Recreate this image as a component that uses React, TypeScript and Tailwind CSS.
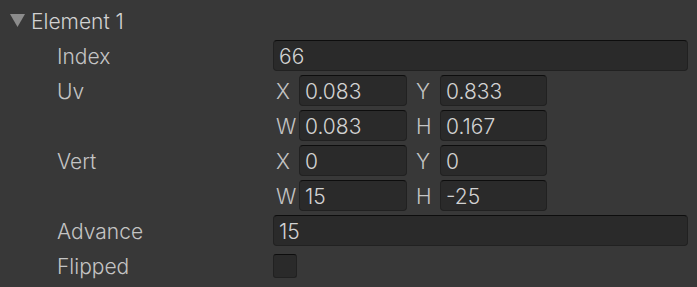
const Field = ({ value, className = "" }: { value: string; className?: string }) => (
  <div
    className={`h-[31px] flex items-center pl-[5px] pt-[3px] bg-[#2a2a2a] border border-[#212121] border-t-[#0d0d0d] rounded-[4px] text-[#d2d2d2] ${className}`}
  >
    {value}
  </div>
);

const Label = ({ text }: { text: string }) => (
  <div className="w-[273px] pl-[57px] pt-[3px] text-[#c4c4c4] shrink-0">{text}</div>
);

const Pair = ({ a, av, b, bv }: { a: string; av: string; b: string; bv: string }) => (
  <div className="flex items-center">
    <span className="w-[26px] pl-[3px] pt-[3px] text-[#c4c4c4]">{a}</span>
    <Field value={av} className="w-[108px]" />
    <span className="w-[33px] pl-[9px] pt-[3px] text-[#c4c4c4]">{b}</span>
    <Field value={bv} className="w-[107px]" />
  </div>
);

export default function App() {
  return (
    <div
      className="w-[697px] h-[287px] bg-[#383838] pt-[5px] flex flex-col gap-[4px] text-[21px] font-light overflow-hidden"
      style={{ fontFamily: "Inter, 'Noto Sans', sans-serif" }}
    >
      <div className="h-[31px] flex items-center">
        <svg width="15" height="14" viewBox="0 0 15 14" className="ml-[10px] mr-[6px] mt-[1px]">
          <polygon points="0,0 15,0 7.5,13" fill="#8c8c8c" />
        </svg>
        <span className="text-[#d2d2d2] pt-[3px]">Element 1</span>
      </div>

      <div className="h-[31px] flex items-center">
        <Label text="Index" />
        <Field value="66" className="w-[415px]" />
      </div>

      <div className="h-[31px] flex items-center">
        <Label text="Uv" />
        <Pair a="X" av="0.083" b="Y" bv="0.833" />
      </div>
      <div className="h-[31px] flex items-center">
        <Label text="" />
        <Pair a="W" av="0.083" b="H" bv="0.167" />
      </div>

      <div className="h-[31px] flex items-center">
        <Label text="Vert" />
        <Pair a="X" av="0" b="Y" bv="0" />
      </div>
      <div className="h-[31px] flex items-center">
        <Label text="" />
        <Pair a="W" av="15" b="H" bv="-25" />
      </div>

      <div className="h-[31px] flex items-center">
        <Label text="Advance" />
        <Field value="15" className="w-[415px]" />
      </div>

      <div className="h-[31px] flex items-center">
        <Label text="Flipped" />
        <div className="w-[24px] h-[24px] bg-[#2a2a2a] border border-[#212121] border-t-[#0d0d0d] rounded-[3px]" />
      </div>
    </div>
  );
}
